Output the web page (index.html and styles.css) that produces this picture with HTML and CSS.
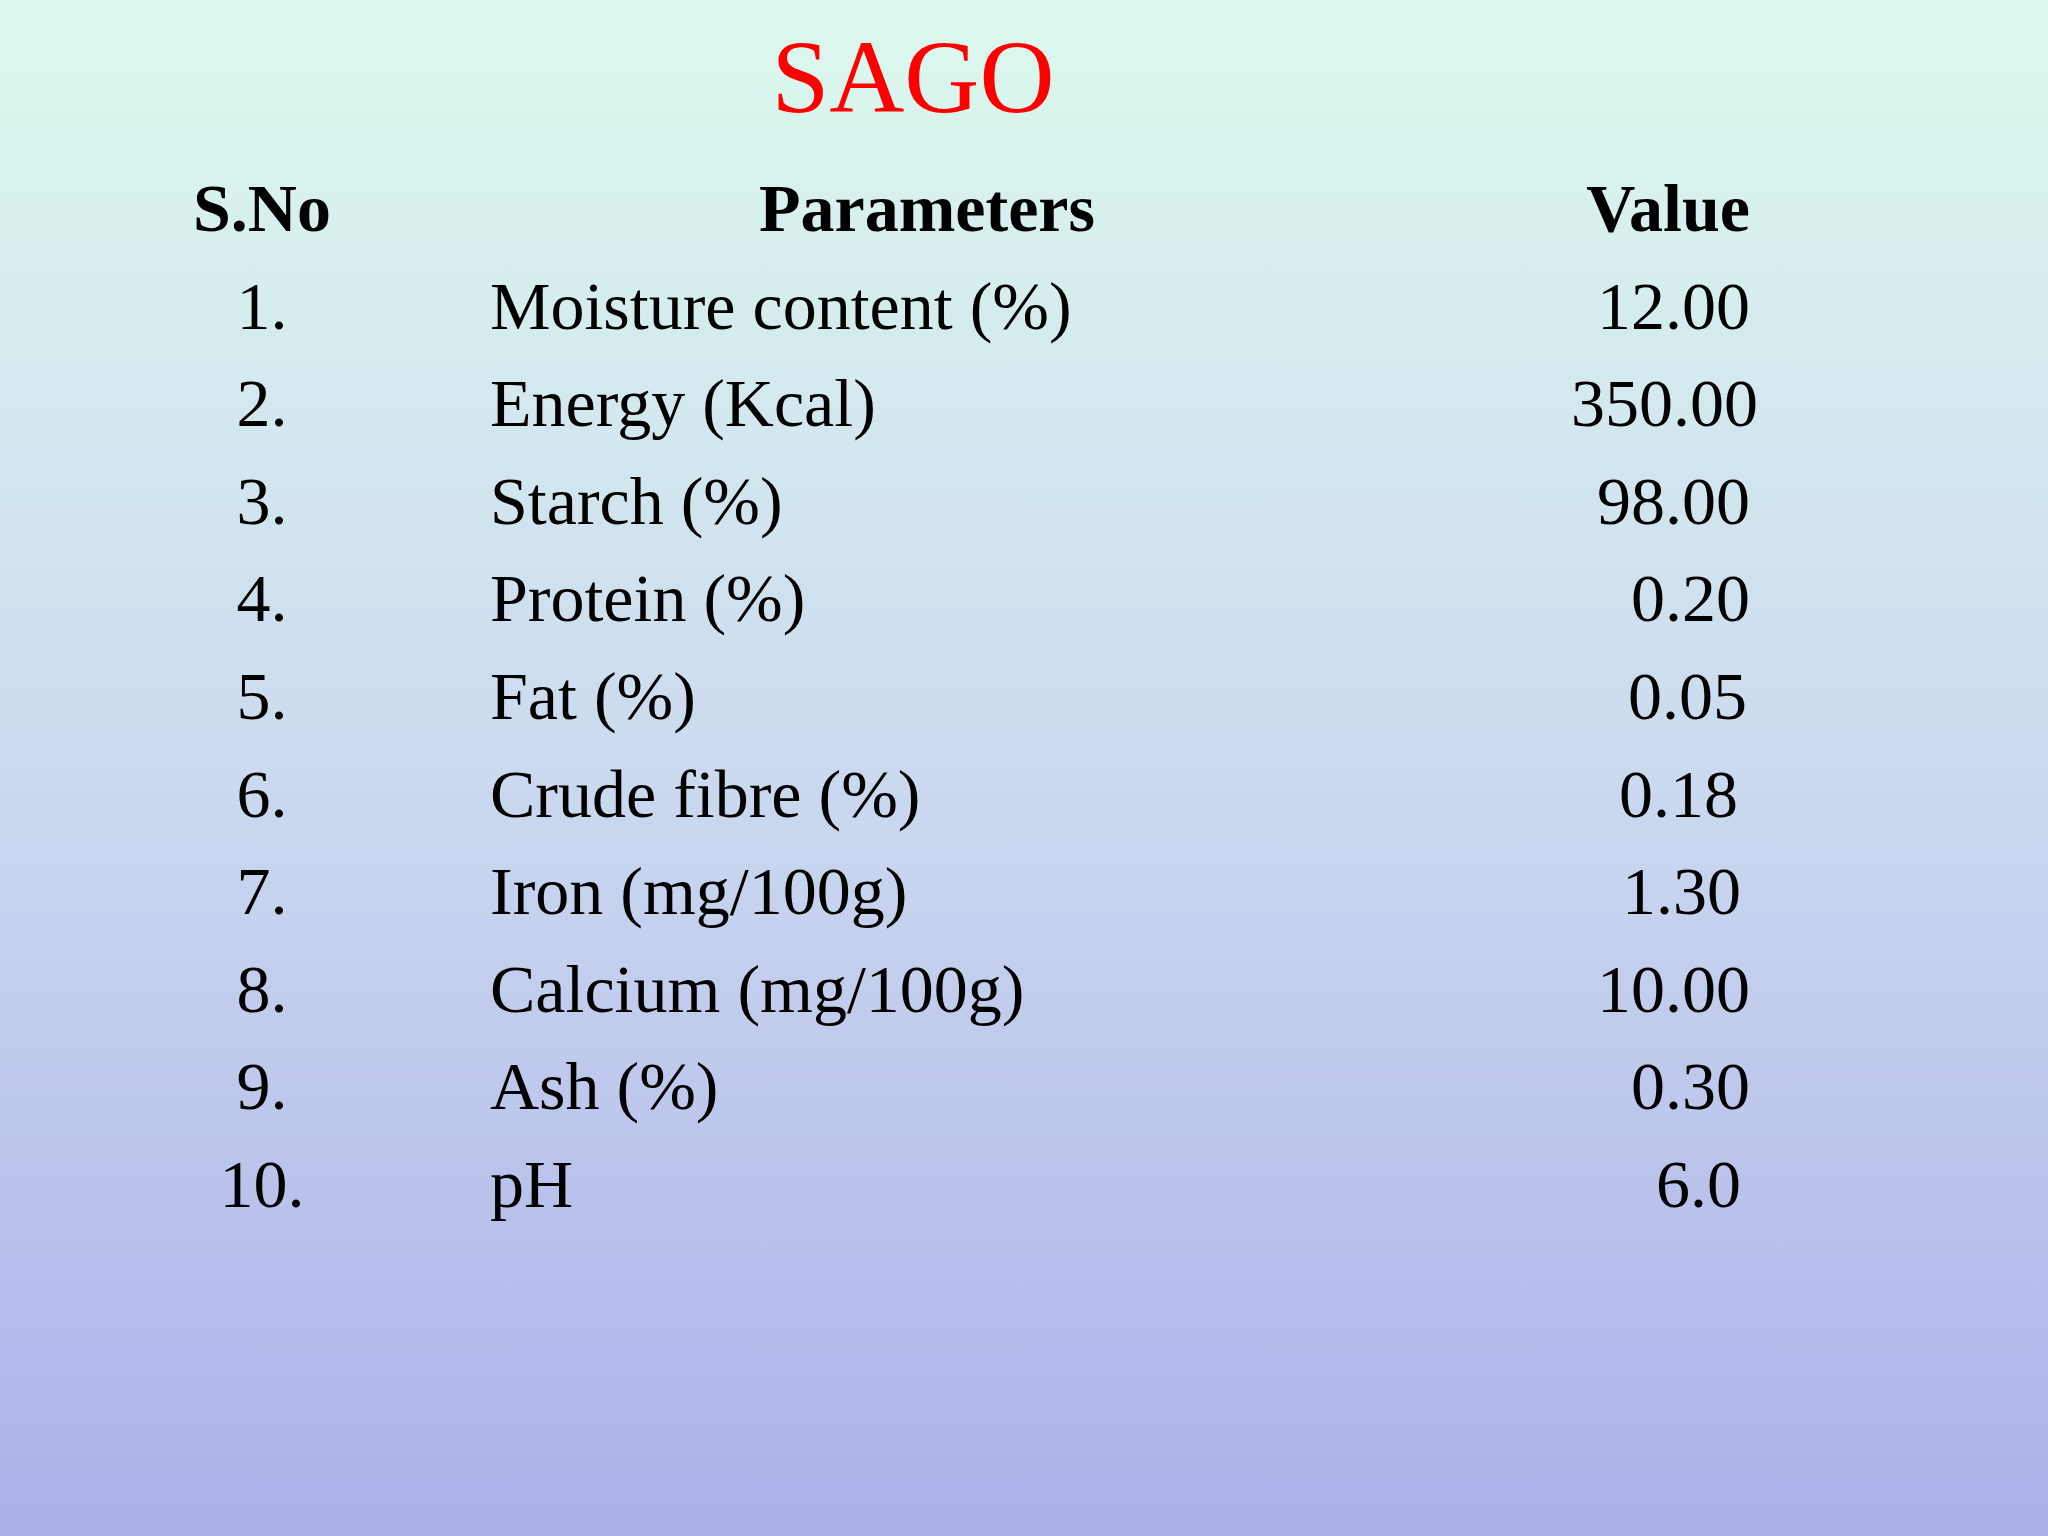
FILE: index.html
```html
<!DOCTYPE html>
<html lang="en">
<head>
<meta charset="utf-8">
<title>SAGO</title>
<link rel="stylesheet" href="styles.css">
</head>
<body>
<main class="slide">
  <h1 class="title">SAGO</h1>
  <div class="table">
    <div class="row head">
      <div class="c-no">S.No</div>
      <div class="c-param">Parameters</div>
      <div class="c-val">Value</div>
    </div>
    <div class="row">
      <div class="c-no">1.</div>
      <div class="c-param">Moisture content (%)</div>
      <div class="c-val">12.00</div>
    </div>
    <div class="row">
      <div class="c-no">2.</div>
      <div class="c-param">Energy (Kcal)</div>
      <div class="c-val out8">350.00</div>
    </div>
    <div class="row">
      <div class="c-no">3.</div>
      <div class="c-param">Starch (%)</div>
      <div class="c-val">98.00</div>
    </div>
    <div class="row">
      <div class="c-no">4.</div>
      <div class="c-param">Protein (%)</div>
      <div class="c-val">0.20</div>
    </div>
    <div class="row">
      <div class="c-no">5.</div>
      <div class="c-param">Fat (%)</div>
      <div class="c-val in3">0.05</div>
    </div>
    <div class="row">
      <div class="c-no">6.</div>
      <div class="c-param">Crude fibre (%)</div>
      <div class="c-val in12">0.18</div>
    </div>
    <div class="row">
      <div class="c-no">7.</div>
      <div class="c-param">Iron (mg/100g)</div>
      <div class="c-val in9">1.30</div>
    </div>
    <div class="row">
      <div class="c-no">8.</div>
      <div class="c-param">Calcium (mg/100g)</div>
      <div class="c-val">10.00</div>
    </div>
    <div class="row">
      <div class="c-no">9.</div>
      <div class="c-param">Ash (%)</div>
      <div class="c-val">0.30</div>
    </div>
    <div class="row">
      <div class="c-no">10.</div>
      <div class="c-param">pH</div>
      <div class="c-val in9">6.0</div>
    </div>
  </div>
</main>
</body>
</html>
```
FILE: styles.css
```css
html, body {
  margin: 0;
  padding: 0;
}

body {
  width: 2048px;
  height: 1536px;
  overflow: hidden;
  background: linear-gradient(to bottom, #dcf9ed 0%, #cbdaef 50%, #adafe9 100%);
  font-family: "Liberation Serif", "Times New Roman", serif;
  color: #000;
}

.slide {
  width: 2048px;
  height: 1536px;
  padding-top: 25px;
  box-sizing: border-box;
}

.title {
  margin: 0;
  width: 1826px;
  text-align: center;
  font-size: 104px;
  line-height: 104px;
  font-weight: normal;
  color: #ff0000;
}

.table {
  margin-top: 31px;
  margin-left: 150px;
  font-size: 68px;
  line-height: 97.6px;
}

.row {
  display: grid;
  grid-template-columns: 224px 998px 378px;
  height: 97.6px;
}

.head {
  font-weight: bold;
}

.c-no {
  text-align: center;
  white-space: nowrap;
}

.c-param {
  padding-left: 116px;
  white-space: nowrap;
}

.head .c-param {
  padding-left: 108px;
  text-align: center;
}

.c-val {
  text-align: right;
  white-space: nowrap;
}

.out8 { margin-right: -8px; }
.in3 { padding-right: 3px; }
.in9 { padding-right: 9px; }
.in12 { padding-right: 12px; }
```
